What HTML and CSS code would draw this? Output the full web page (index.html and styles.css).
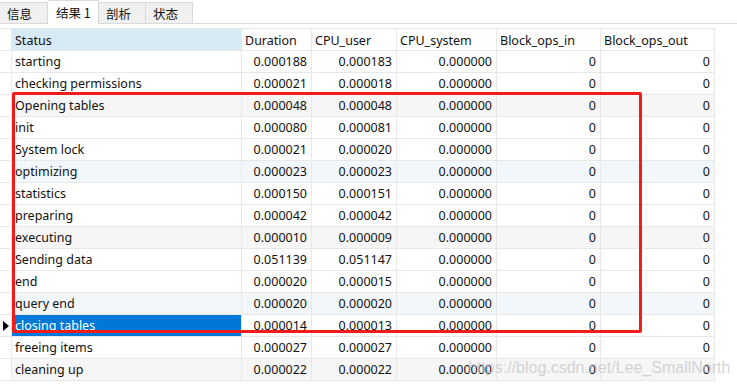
FILE: index.html
```html
<!DOCTYPE html>
<html>
<head>
<meta charset="utf-8">
<link rel="stylesheet" href="styles.css">
</head>
<body>
<div class="tabs">
  <div class="tab">信息</div>
  <div class="tab active">结果 1</div>
  <div class="tab">剖析</div>
  <div class="tab">状态</div>
  <div class="tabfill"></div>
</div>
<div class="gridwrap">
  <div class="row head">
    <div class="c ind"></div>
    <div class="c sorted">Status</div>
    <div class="c">Duration</div>
    <div class="c">CPU_user</div>
    <div class="c">CPU_system</div>
    <div class="c">Block_ops_in</div>
    <div class="c">Block_ops_out</div>
  </div>
  <div class="row"><div class="c ind"></div><div class="c">starting</div><div class="c n">0.000188</div><div class="c n">0.000183</div><div class="c n">0.000000</div><div class="c n">0</div><div class="c n">0</div></div>
  <div class="row"><div class="c ind"></div><div class="c">checking permissions</div><div class="c n">0.000021</div><div class="c n">0.000018</div><div class="c n">0.000000</div><div class="c n">0</div><div class="c n">0</div></div>
  <div class="row gray"><div class="c ind"></div><div class="c">Opening tables</div><div class="c n">0.000048</div><div class="c n">0.000048</div><div class="c n">0.000000</div><div class="c n">0</div><div class="c n">0</div></div>
  <div class="row"><div class="c ind"></div><div class="c">init</div><div class="c n">0.000080</div><div class="c n">0.000081</div><div class="c n">0.000000</div><div class="c n">0</div><div class="c n">0</div></div>
  <div class="row"><div class="c ind"></div><div class="c">System lock</div><div class="c n">0.000021</div><div class="c n">0.000020</div><div class="c n">0.000000</div><div class="c n">0</div><div class="c n">0</div></div>
  <div class="row blue"><div class="c ind"></div><div class="c">optimizing</div><div class="c n">0.000023</div><div class="c n">0.000023</div><div class="c n">0.000000</div><div class="c n">0</div><div class="c n">0</div></div>
  <div class="row"><div class="c ind"></div><div class="c">statistics</div><div class="c n">0.000150</div><div class="c n">0.000151</div><div class="c n">0.000000</div><div class="c n">0</div><div class="c n">0</div></div>
  <div class="row"><div class="c ind"></div><div class="c">preparing</div><div class="c n">0.000042</div><div class="c n">0.000042</div><div class="c n">0.000000</div><div class="c n">0</div><div class="c n">0</div></div>
  <div class="row gray"><div class="c ind"></div><div class="c">executing</div><div class="c n">0.000010</div><div class="c n">0.000009</div><div class="c n">0.000000</div><div class="c n">0</div><div class="c n">0</div></div>
  <div class="row"><div class="c ind"></div><div class="c">Sending data</div><div class="c n">0.051139</div><div class="c n">0.051147</div><div class="c n">0.000000</div><div class="c n">0</div><div class="c n">0</div></div>
  <div class="row"><div class="c ind"></div><div class="c">end</div><div class="c n">0.000020</div><div class="c n">0.000015</div><div class="c n">0.000000</div><div class="c n">0</div><div class="c n">0</div></div>
  <div class="row blue"><div class="c ind"></div><div class="c">query end</div><div class="c n">0.000020</div><div class="c n">0.000020</div><div class="c n">0.000000</div><div class="c n">0</div><div class="c n">0</div></div>
  <div class="row"><div class="c ind"><span class="arrow"></span></div><div class="c selected">closing tables</div><div class="c n">0.000014</div><div class="c n">0.000013</div><div class="c n">0.000000</div><div class="c n">0</div><div class="c n">0</div></div>
  <div class="row"><div class="c ind"></div><div class="c">freeing items</div><div class="c n">0.000027</div><div class="c n">0.000027</div><div class="c n">0.000000</div><div class="c n">0</div><div class="c n">0</div></div>
  <div class="row gray"><div class="c ind"></div><div class="c">cleaning up</div><div class="c n">0.000022</div><div class="c n">0.000022</div><div class="c n">0.000000</div><div class="c n">0</div><div class="c n">0</div></div>
  <div class="highlight"></div>
  <div class="watermark">https://blog.csdn.net/Lee_SmallNorth</div>
</div>
</body>
</html>
```
FILE: styles.css
```css
html, body {
  margin: 0;
  padding: 0;
  background: #fff;
}
body {
  width: 737px;
  height: 392px;
  overflow: hidden;
  font-family: "Noto Sans", "Noto Sans CJK SC", sans-serif;
  font-size: 12.5px;
  color: #111;
  position: relative;
}
.tabs {
  display: flex;
  align-items: flex-end;
  height: 24px;
  box-sizing: border-box;
}
.tab {
  height: 22px;
  box-sizing: border-box;
  background: #f0f0f0;
  border: 1px solid #d9d9d9;
  border-left: none;
  border-bottom: 1px solid #d9d9d9;
  display: flex;
  align-items: center;
  font-family: "Noto Sans CJK SC", sans-serif;
  font-size: 12.5px;
  width: 47px;
  padding-left: 7px;
}
.tab:first-child {
  width: 48px;
  padding-left: 7px;
}
.tab.active {
  background: #fff;
  height: 24px;
  border-bottom: 1px solid #fff;
  width: 51px;
  padding-left: 8px;
}
.tabfill {
  flex: 1;
  height: 24px;
  box-sizing: border-box;
  border-bottom: 1px solid #d9d9d9;
}
.gridwrap {
  position: relative;
  margin-top: 4px;
  width: 715px;
}
.row {
  display: grid;
  grid-template-columns: 12px 230px 70px 85px 100px 104px 114px;
  height: 22px;
}
.row.head {
  height: 23px;
  border-top: 1px solid #e4e4e4;
  box-sizing: border-box;
}
.c {
  box-sizing: border-box;
  border-right: 1px solid #e8e8e8;
  border-bottom: 1px solid #e8e8e8;
  padding: 0 4px 0 3px;
  display: flex;
  align-items: center;
  white-space: nowrap;
  overflow: hidden;
}
.head .c {
  padding-top: 1px;
}
.head .ind {
  border-bottom: 1px solid #e8e8e8;
}
.sorted {
  background: #d9eaf7;
}
.n {
  justify-content: flex-end;
}
.row.gray .c {
  background: #f6f6f6;
}
.row.blue .c {
  background: #f2f7fc;
}
.row .ind {
  background: #fff !important;
  padding: 0;
  justify-content: center;
}
.selected {
  background: #0078d7;
  color: #fff;
}
.arrow {
  width: 0;
  height: 0;
  border-top: 5px solid transparent;
  border-bottom: 5px solid transparent;
  border-left: 6px solid #000;
  margin-left: 1px;
}
.highlight {
  position: absolute;
  left: 12px;
  top: 64px;
  width: 630px;
  height: 241px;
  box-sizing: border-box;
  border: 3px solid #f21c1c;
  border-radius: 2px;
  pointer-events: none;
}
.watermark {
  position: absolute;
  left: 468px;
  top: 331px;
  font-family: "Liberation Sans", Arial, sans-serif;
  font-size: 16px;
  color: rgba(195, 195, 195, 0.7);
  white-space: nowrap;
}
```
